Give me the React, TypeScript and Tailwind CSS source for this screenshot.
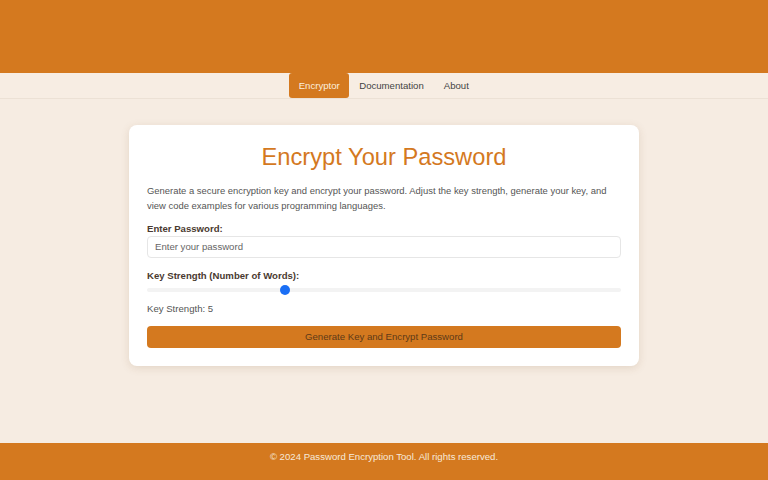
import React from "react";

export default function App() {
  const value = 5;
  const min = 1;
  const max = 15;
  const pct = (value - min) / (max - min);
  return (
    <div className="min-h-screen flex flex-col bg-[#f6ece2] font-['Liberation_Sans',Arial,sans-serif]">
      <header className="h-[73px] bg-[#d4791f]" />
      <nav className="h-[26px] flex justify-center bg-[#f7ede3] border-b border-[#ece1d5]">
        <a className="h-[25px] pt-[1px] px-[9.5px] flex items-center text-[9.6px] text-[#fbeede] bg-[#d4791f] rounded-b-[3px] rounded-t-[3px]">
          Encryptor
        </a>
        <a className="h-[25px] pt-[1px] px-[10px] flex items-center text-[9.6px] text-[#444]">
          Documentation
        </a>
        <a className="h-[25px] pt-[1px] px-[10px] flex items-center text-[9.6px] text-[#444]">
          About
        </a>
      </nav>
      <main className="flex-1 flex justify-center items-start">
        <div className="mt-[26px] w-[510px] bg-white rounded-[8px] shadow-[0_2px_8px_rgba(120,80,40,0.15)] px-[18px] pt-[18px] pb-[18px]">
          <h1 className="text-center text-[23.7px] leading-[28px] text-[#d4791f]">
            Encrypt Your Password
          </h1>
          <p className="mt-[11.5px] text-[9.45px] leading-[15px] text-[#555] whitespace-nowrap">
            Generate a secure encryption key and encrypt your password. Adjust the key strength, generate your key, and
            <br />
            view code examples for various programming languages.
          </p>
          <label className="block mt-[8px] text-[9.6px] leading-[15px] font-bold text-[#4a3a30]">
            Enter Password:
          </label>
          <div className="mt-[0.5px] h-[22px] border border-[#e6e6e6] rounded-[4px] flex items-center px-[7px] text-[9.6px] text-[#666]">
            Enter your password
          </div>
          <label className="block mt-[9.5px] text-[9.6px] leading-[15px] font-bold text-[#4a3a30]">
            Key Strength (Number of Words):
          </label>
          <div className="relative mt-[1.5px] h-[12px]">
            <div className="absolute left-0 right-0 top-[4px] h-[4px] rounded-full bg-[#f3f3f3]" />
            <div
              className="absolute top-[1px] w-[10px] h-[10px] rounded-full bg-[#1a6ef5]"
              style={{ left: `calc(${pct * 100}% - ${pct * 10}px)` }}
            />
          </div>
          <div className="mt-[4.5px] text-[9.6px] leading-[15px] text-[#555]">
            Key Strength: {value}
          </div>
          <button className="mt-[10.5px] w-full h-[22px] rounded-[4px] bg-[#d4791f] text-[9.6px] text-[#5e3a18] flex items-center justify-center">
            Generate Key and Encrypt Password
          </button>
        </div>
      </main>
      <footer className="h-[37px] bg-[#d4791f] flex justify-center pt-[6px] text-[9.6px] leading-[15px] text-[#f7e9da]">
        © 2024 Password Encryption Tool. All rights reserved.
      </footer>
    </div>
  );
}
